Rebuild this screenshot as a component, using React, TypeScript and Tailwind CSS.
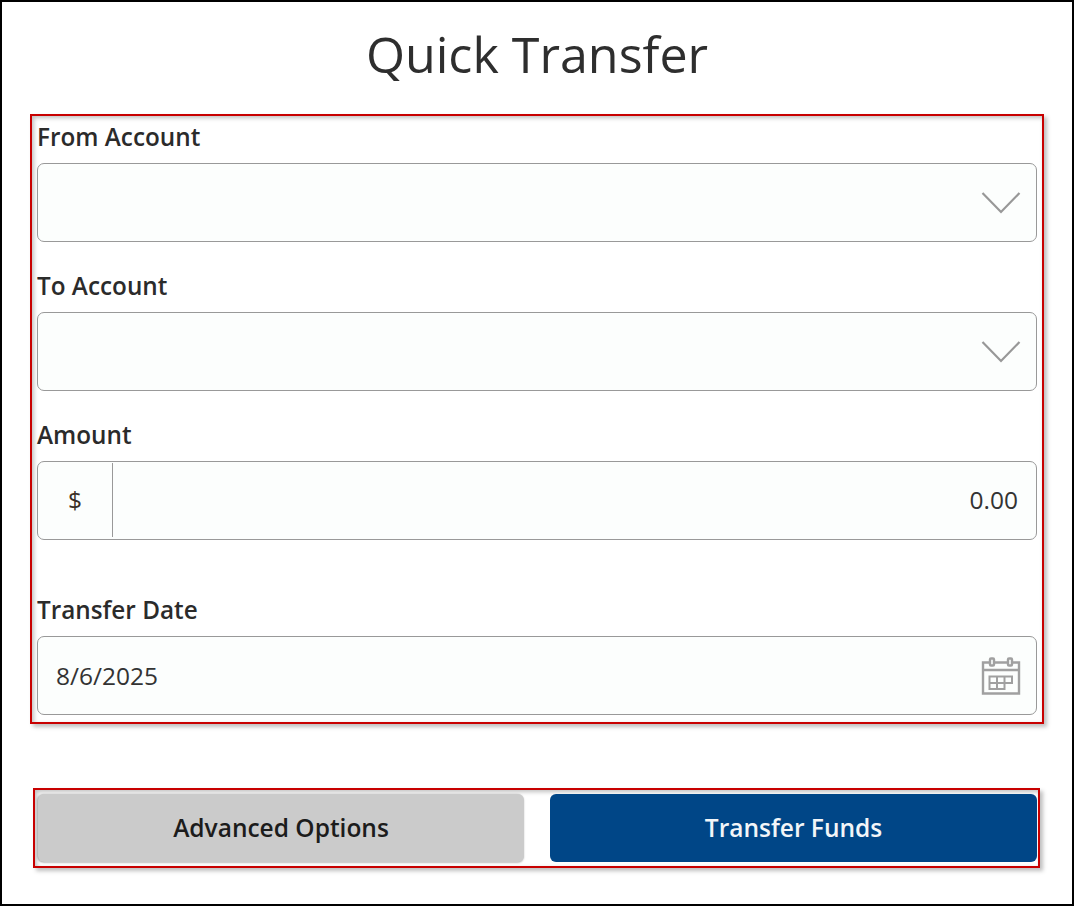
import React from "react";

function Chevron() {
  return (
    <svg width="40" height="24" viewBox="0 0 40 24" fill="none" className="shrink-0">
      <path d="M1.5 2 L20 21 L38.5 2" stroke="#989898" strokeWidth="2.2" />
    </svg>
  );
}

function CalendarIcon() {
  return (
    <svg width="40" height="38" viewBox="0 0 40 38" fill="none" stroke="#a0a0a0" strokeWidth="2.4" className="shrink-0">
      <path d="M8 5.5H2V36.5H38V5.5H32M14 5.5H26" />
      <path d="M2 13H38" />
      <rect x="9" y="1.5" width="4" height="7" rx="1" />
      <rect x="27" y="1.5" width="4" height="7" rx="1" />
      <path d="M8.5 19.5H31V26H23.5V32H8.5Z M8.5 26H23.5 M16 19.5V32 M23.5 19.5V26" strokeWidth="2" />
    </svg>
  );
}

function Field({ label, className, children }: { label: string; className?: string; children: React.ReactNode }) {
  return (
    <div className={className}>
      <label className="mb-[6px] flex h-10 items-center text-[24.3px] font-[550] leading-none text-[#2b2b2b]">{label}</label>
      <div className="flex h-[79px] items-center rounded-[7px] border border-[#999999] bg-[#fcfefd] text-[24.5px] text-[#333333]">
        {children}
      </div>
    </div>
  );
}

export default function App() {
  return (
    <div className="h-[906px] w-[1074px] border-2 border-black bg-white font-['Open_Sans',sans-serif]">
      <h1 className="flex h-[112px] items-center justify-center pb-[8px] text-[50.2px] font-normal leading-none text-[#2e2e2e]">
        Quick Transfer
      </h1>
      <div className="ml-[28px] w-[1014px] border-2 border-[#c80000] px-[5px] pb-[7px] pt-px shadow-[3px_3px_4px_rgba(0,0,0,0.25),inset_2px_2px_4px_rgba(0,0,0,0.25)]">
        <Field label="From Account">
          <div className="ml-auto mr-[15px]"><Chevron /></div>
        </Field>
        <Field label="To Account" className="mt-6">
          <div className="ml-auto mr-[15px]"><Chevron /></div>
        </Field>
        <Field label="Amount" className="mt-6">
          <div className="mb-[2px] flex h-[74px] w-[75px] items-center justify-center border-r border-[#999999] pt-px text-[#3a3026]">$</div>
          <div className="ml-auto mr-[18px]">0.00</div>
        </Field>
        <Field label="Transfer Date" className="mt-[50px]">
          <div className="ml-[18px] mt-px">8/6/2025</div>
          <div className="ml-auto mr-[15px] flex"><CalendarIcon /></div>
        </Field>
      </div>
      <div className="ml-[31px] mt-[64px] flex h-[80px] w-[1007px] items-center gap-[26px] border-2 border-[#c80000] pl-[3px] pr-[1px] shadow-[3px_3px_4px_rgba(0,0,0,0.25),inset_2px_2px_4px_rgba(0,0,0,0.25)]">
        <button className="h-[68px] w-[486px] rounded-[6px] bg-[#cbcbcb] text-[24.5px] font-[560] text-[#1c1c1c] shadow-[0px_1px_2px_rgba(0,0,0,0.2),-1px_0px_2px_rgba(0,0,0,0.2)]">
          Advanced Options
        </button>
        <button className="h-[68px] w-[487px] rounded-[6px] bg-[#004687] text-[24.5px] font-[560] text-[#f2f5f8]">
          Transfer Funds
        </button>
      </div>
    </div>
  );
}
